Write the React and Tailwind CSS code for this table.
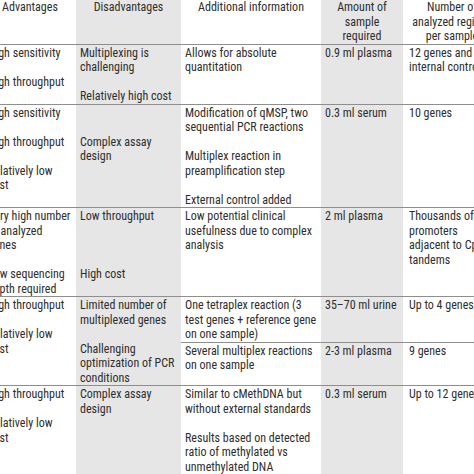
import React from "react";

const W = ["w-[92px]", "w-[105px]", "w-[140px]", "w-[82px]", "w-[94px]"];
const GRAY = "bg-[#e6e6e6]";

function Lines({ lines, center }) {
  return (
    <>
      {lines.map((l, i) => (
        <div
          key={i}
          className={
            "h-[14.5px] whitespace-nowrap " + (center ? "text-center" : "")
          }
        >
          {l}
        </div>
      ))}
    </>
  );
}

function Cell({ w, gray, pl = "pl-1", lines, center, grow }) {
  return (
    <div
      className={
        "shrink-0 pt-[1px] " +
        w +
        " " +
        pl +
        " " +
        (gray ? GRAY : "") +
        (grow ? " flex-1" : "")
      }
    >
      <Lines lines={lines} center={center} />
    </div>
  );
}

const ROW = "flex border-t-[1.5px] border-[#8e8e8e]";

export default function App() {
  return (
    <div className="w-[474px] h-[474px] overflow-hidden bg-white">
      <div className="ml-[-16px] w-[513px] font-['Roboto',sans-serif] font-stretch-[87.5%] text-[12px] leading-[14.5px] text-[#2e2e2e]">
        {/* Header */}
        <div className="flex">
          <div className={"shrink-0 " + W[0]}>
            <Lines lines={["Advantages"]} center />
          </div>
          <div className={"shrink-0 " + W[1] + " " + GRAY}>
            <Lines lines={["Disadvantages"]} center />
          </div>
          <div className={"shrink-0 " + W[2]}>
            <Lines lines={["Additional information"]} center />
          </div>
          <div className={"shrink-0 " + W[3] + " " + GRAY}>
            <Lines lines={["Amount of", "sample", "required"]} center />
          </div>
          <div className={"shrink-0 pl-1 " + W[4]}>
            <Lines
              lines={["Number of", "analyzed regions", "per sample"]}
              center
            />
          </div>
        </div>

        {/* Row 1 */}
        <div className={ROW}>
          <Cell w={W[0]} lines={["High sensitivity", "", "High throughput"]} />
          <Cell
            w={W[1]}
            gray
            lines={["Multiplexing is", "challenging", "", "Relatively high cost"]}
          />
          <Cell w={W[2]} lines={["Allows for absolute", "quantitation"]} />
          <Cell w={W[3]} gray lines={["0.9 ml plasma"]} />
          <Cell
            w={W[4]}
            pl="pl-[6px]"
            lines={["12 genes and", "internal control"]}
          />
        </div>

        {/* Row 2 */}
        <div className={ROW}>
          <Cell
            w={W[0]}
            lines={[
              "High sensitivity",
              "",
              "High throughput",
              "",
              "Relatively low",
              "cost",
            ]}
          />
          <Cell w={W[1]} gray lines={["", "", "Complex assay", "design"]} />
          <Cell
            w={W[2]}
            lines={[
              "Modification of qMSP, two",
              "sequential PCR reactions",
              "",
              "Multiplex reaction in",
              "preamplification step",
              "",
              "External control added",
            ]}
          />
          <Cell w={W[3]} gray lines={["0.3 ml serum"]} />
          <Cell w={W[4]} pl="pl-[6px]" lines={["10 genes"]} />
        </div>

        {/* Row 3 */}
        <div className={ROW}>
          <Cell
            w={W[0]}
            lines={[
              "Very high number",
              "of analyzed",
              "genes",
              "",
              "Low sequencing",
              "depth required",
            ]}
          />
          <Cell
            w={W[1]}
            gray
            lines={["Low throughput", "", "", "", "High cost"]}
          />
          <Cell
            w={W[2]}
            lines={[
              "Low potential clinical",
              "usefulness due to complex",
              "analysis",
            ]}
          />
          <Cell w={W[3]} gray lines={["2 ml plasma"]} />
          <Cell
            w={W[4]}
            pl="pl-[6px]"
            lines={["Thousands of", "promoters", "adjacent to CpG", "tandems"]}
          />
        </div>

        {/* Row 4 */}
        <div className={ROW}>
          <Cell
            w={W[0]}
            lines={["High throughput", "", "Relatively low", "cost"]}
          />
          <Cell
            w={W[1]}
            gray
            lines={[
              "Limited number of",
              "multiplexed genes",
              "",
              "Challenging",
              "optimization of PCR",
              "conditions",
            ]}
          />
          <div className="flex flex-col w-[316px] shrink-0">
            <div className="flex">
              <Cell
                w={W[2]}
                lines={[
                  "One tetraplex reaction (3",
                  "test genes + reference gene",
                  "on one sample)",
                ]}
              />
              <Cell w={W[3]} gray lines={["35–70 ml urine"]} />
              <Cell w={W[4]} pl="pl-[6px]" lines={["Up to 4 genes"]} />
            </div>
            <div className={ROW + " flex-1"}>
              <Cell
                w={W[2]}
                lines={["Several multiplex reactions", "on one sample"]}
              />
              <Cell w={W[3]} gray lines={["2-3 ml plasma"]} />
              <Cell w={W[4]} pl="pl-[6px]" lines={["9 genes"]} />
            </div>
          </div>
        </div>

        {/* Row 5 */}
        <div className={ROW}>
          <Cell
            w={W[0]}
            lines={["High throughput", "", "Relatively low", "cost"]}
          />
          <Cell w={W[1]} gray lines={["Complex assay", "design"]} />
          <Cell
            w={W[2]}
            lines={[
              "Similar to cMethDNA but",
              "without external standards",
              "",
              "Results based on detected",
              "ratio of methylated vs",
              "unmethylated DNA",
            ]}
          />
          <Cell w={W[3]} gray lines={["0.3 ml serum"]} />
          <Cell w={W[4]} pl="pl-[6px]" lines={["Up to 12 genes"]} />
        </div>
      </div>
    </div>
  );
}
